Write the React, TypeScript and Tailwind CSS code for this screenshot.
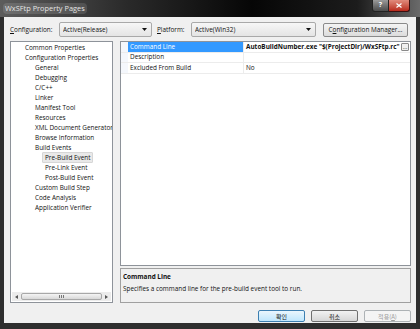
import React from "react";

type TreeNode = { label: string; level: number; selected?: boolean };

const treeItems: TreeNode[] = [
  { label: "Common Properties", level: 0 },
  { label: "Configuration Properties", level: 0 },
  { label: "General", level: 1 },
  { label: "Debugging", level: 1 },
  { label: "C/C++", level: 1 },
  { label: "Linker", level: 1 },
  { label: "Manifest Tool", level: 1 },
  { label: "Resources", level: 1 },
  { label: "XML Document Generator", level: 1 },
  { label: "Browse Information", level: 1 },
  { label: "Build Events", level: 1 },
  { label: "Pre-Build Event", level: 2, selected: true },
  { label: "Pre-Link Event", level: 2 },
  { label: "Post-Build Event", level: 2 },
  { label: "Custom Build Step", level: 1 },
  { label: "Code Analysis", level: 1 },
  { label: "Application Verifier", level: 1 },
];

const indent = ["pl-[11px]", "pl-[21px]", "pl-[31px]"];

const Combo = ({ value, className }: { value: string; className: string }) => (
  <div
    className={`flex items-center h-[15px] border border-[#a9a9a9] rounded-[2px] bg-gradient-to-b from-[#f7f7f7] to-[#e4e4e4] pl-[3px] pr-[4px] ${className}`}
  >
    <span className="flex-1 whitespace-nowrap overflow-hidden">{value}</span>
    <svg width="5" height="3" viewBox="0 0 5 3">
      <path d="M0 0h5L2.5 3z" fill="#111" />
    </svg>
  </div>
);

const Arrow = ({ dir }: { dir: "l" | "r" }) => (
  <div className="w-[9px] h-full flex items-center justify-center">
    <svg width="3" height="4" viewBox="0 0 3 4">
      <path d={dir === "l" ? "M3 0v4L0 2z" : "M0 0v4l3-2z"} fill="#555" />
    </svg>
  </div>
);

const DialogButton = ({
  children,
  variant,
}: {
  children: React.ReactNode;
  variant: "default" | "normal" | "disabled";
}) => {
  const styles = {
    default:
      "border-[#3c7fb1] bg-gradient-to-b from-[#eaf6fd] to-[#bee6fd] text-[#111]",
    normal: "border-[#707070] bg-gradient-to-b from-[#f2f2f2] to-[#d6d6d6] text-[#111]",
    disabled: "border-[#adb2b5] bg-[#f4f4f4] text-[#9a9a9a]",
  }[variant];
  return (
    <div
      className={`w-[47px] h-[12px] border rounded-[2px] flex items-center justify-center font-['Noto_Sans_CJK_KR',sans-serif] text-[6px] ${styles}`}
    >
      {children}
    </div>
  );
};

export default function App() {
  return (
    <div className="w-[420px] h-[329px] flex flex-col bg-[#2e2e2e] font-['Open_Sans',sans-serif] text-[6.4px] text-[#111] overflow-hidden">
      {/* title bar */}
      <div className="h-[17px] flex items-start bg-[linear-gradient(90deg,#5c5c5c_0%,#2a2a2a_30%,#060606_60%,#1c1c1c_85%,#6a6a6a_100%)]">
        <div className="mt-[3px] ml-[3px] px-[2px] h-[11px] flex items-center rounded-[4px] bg-[#ffffff1f] text-[#e4e4e4] text-[7.4px] whitespace-nowrap">
          WxSFtp Property Pages
        </div>
        <div className="flex-1" />
        <div className="flex mr-[10px]">
          <div className="w-[17px] h-[12px] border border-[#222] border-t-0 rounded-bl-[3px] bg-gradient-to-b from-[#9a9a9a] to-[#4c4c4c] flex items-center justify-center text-white text-[7px] font-bold">
            ?
          </div>
          <div className="w-[21px] h-[12px] border border-[#3a1010] border-t-0 border-l-0 rounded-br-[3px] bg-gradient-to-b from-[#e08a7c] to-[#b8261a] flex items-center justify-center">
            <svg width="6" height="5" viewBox="0 0 6 5">
              <path d="M0.5 0.5L5.5 4.5M5.5 0.5L0.5 4.5" stroke="#fff" strokeWidth="1.2" />
            </svg>
          </div>
        </div>
      </div>

      {/* client area */}
      <div className="flex-1 mx-[4px] mb-[6px] bg-[#f0f0f0] flex flex-col pl-[6px] pr-[5px] pt-[5px] pb-[1px]">
        {/* configuration row */}
        <div className="flex items-center h-[15px]">
          <span className="w-[49px] whitespace-nowrap">
            <span className="underline">C</span>onfiguration:
          </span>
          <Combo value="Active(Release)" className="w-[93px]" />
          <span className="ml-[5px] w-[34px] whitespace-nowrap">
            <span className="underline">P</span>latform:
          </span>
          <Combo value="Active(Win32)" className="w-[125px]" />
          <div className="ml-[7px] w-[85px] h-[14px] border border-[#8a8a8a] rounded-[2px] bg-gradient-to-b from-[#f4f4f4] to-[#dcdcdc] flex items-center justify-center whitespace-nowrap">
            C<span className="underline">o</span>nfiguration Manager...
          </div>
        </div>

        {/* main area */}
        <div className="mt-[4px] flex-1 flex gap-[7px]">
          {/* tree */}
          <div className="w-[103px] border border-[#8e939a] bg-white flex flex-col">
            <div className="flex-1 overflow-hidden">
              {treeItems.map((item) => (
                <div
                  key={item.label}
                  className={`h-[10px] flex items-center whitespace-nowrap ${indent[item.level]}`}
                >
                  <span
                    className={`px-[2px] leading-[9px] ${item.selected ? "bg-[#e9e9e9] border border-[#d6d6d6] rounded-[1px]" : "border border-transparent"}`}
                  >
                    {item.label}
                  </span>
                </div>
              ))}
            </div>
            <div className="h-[9px] mb-[1px] mx-[1px] flex items-center bg-[#ececec]">
              <Arrow dir="l" />
              <div className="flex-1 h-[7px] border border-[#a8a8a8] rounded-[2px] bg-gradient-to-b from-[#f5f5f5] to-[#d8d8d8] flex items-center justify-center gap-[1px]">
                <div className="w-[1px] h-[3px] bg-[#777]" />
                <div className="w-[1px] h-[3px] bg-[#777]" />
                <div className="w-[1px] h-[3px] bg-[#777]" />
              </div>
              <Arrow dir="r" />
            </div>
          </div>

          {/* right side */}
          <div className="flex-1 flex flex-col">
            <div className="flex-1 border border-[#8e939a] bg-white flex flex-col">
              <div className="flex h-[10.5px] border-b border-[#ececec]">
                <div className="w-[7px] bg-[#f4f7fc]" />
                <div className="w-[115px] bg-[#3399ff] text-white flex items-center pl-[2px] whitespace-nowrap">
                  Command Line
                </div>
                <div className="flex-1 border-l border-[#ececec] flex items-center pl-[2px] font-bold whitespace-nowrap overflow-hidden">
                  <span className="flex-1">AutoBuildNumber.exe "$(ProjectDir)/WxSFtp.rc"</span>
                  <div className="w-[8px] h-[8px] mr-[1px] border border-[#8a8a8a] rounded-[1px] bg-[#f0f0f0] flex items-end justify-center leading-[6px] font-normal text-[6px]">
                    ...
                  </div>
                </div>
              </div>
              <div className="flex h-[10.5px] border-b border-[#ececec]">
                <div className="w-[7px] bg-[#f4f7fc]" />
                <div className="w-[115px] flex items-center pl-[2px]">Description</div>
                <div className="flex-1 border-l border-[#ececec]" />
              </div>
              <div className="flex h-[10.5px] border-b border-[#ececec]">
                <div className="w-[7px] bg-[#f4f7fc]" />
                <div className="w-[115px] flex items-center pl-[2px] whitespace-nowrap">
                  Excluded From Build
                </div>
                <div className="flex-1 border-l border-[#ececec] flex items-center pl-[2px]">No</div>
              </div>
              <div className="flex-1" />
            </div>
            <div className="mt-[2px] h-[35px] border border-[#a0a0a0] bg-[#f0f0f0] px-[2px] pt-[3px] flex flex-col gap-[2px]">
              <div className="font-bold">Command Line</div>
              <div className="whitespace-nowrap">
                Specifies a command line for the pre-build event tool to run.
              </div>
            </div>
          </div>
        </div>

        {/* buttons */}
        <div className="mt-[7px] flex justify-end gap-[6px]">
          <DialogButton variant="default">확인</DialogButton>
          <DialogButton variant="normal">취소</DialogButton>
          <DialogButton variant="disabled">
            적용(<span className="underline">A</span>)
          </DialogButton>
        </div>
      </div>
    </div>
  );
}
